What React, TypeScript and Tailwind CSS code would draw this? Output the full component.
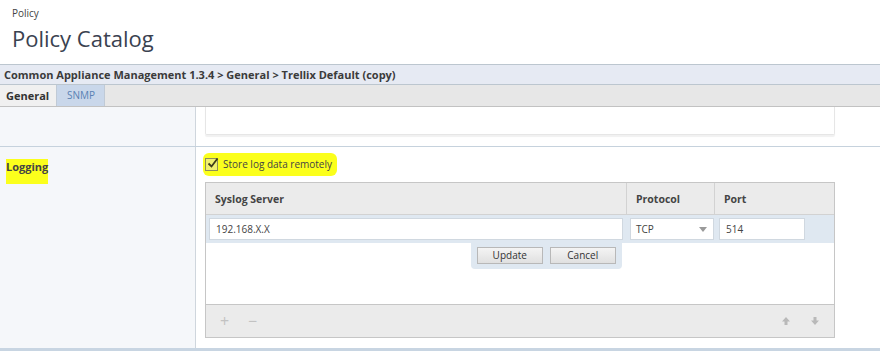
function ArrowUp() {
  return (
    <svg viewBox="0 0 10 10" className="h-[10px] w-[10px]" aria-hidden>
      <path d="M5 1 L9 5.5 H6.5 V9 H3.5 V5.5 H1 Z" fill="#b9b9b9" />
    </svg>
  );
}

function ArrowDown() {
  return (
    <svg viewBox="0 0 10 10" className="h-[10px] w-[10px]" aria-hidden>
      <path d="M5 9 L9 4.5 H6.5 V1 H3.5 V4.5 H1 Z" fill="#b9b9b9" />
    </svg>
  );
}

function CheckBox() {
  return (
    <span className="relative flex h-[13px] w-[13px] shrink-0 items-center justify-center border border-[#8f8f5a] bg-[#f0f070]">
      <svg viewBox="0 0 12 12" className="absolute -top-[2px] left-[1px] h-[12px] w-[12px]" aria-hidden>
        <path d="M1.5 6.5 L4.5 9.5 L10.5 1.5" fill="none" stroke="#3d3d1a" strokeWidth="1.8" />
      </svg>
    </span>
  );
}

export default function App() {
  return (
    <div className="h-[351px] w-[880px] overflow-hidden bg-white font-['Open_Sans',sans-serif] text-[#333]">
      <div className="px-3 pt-[6px]">
        <p className="text-[10px] leading-[14px] text-[#444]">Policy</p>
        <h1 className="mt-[3px] text-[22px] leading-[30px] text-[#3a4250]">Policy Catalog</h1>
      </div>

      <div className="mt-[11px] border-y border-[#bcc6cf] bg-[#e6eaf3] px-[4px] text-[11px] font-bold leading-[19px] text-[#3b3b3b]">
        Common Appliance Management 1.3.4 &gt; General &gt; Trellix Default (copy)
      </div>

      <div className="flex h-[22px] border-b border-[#c2c2c2] bg-[#e7e7e7] text-[11px] leading-[21px]">
        <div className="w-[56px] bg-[#f0f0f0] pl-[6px] font-bold text-[#333]">General</div>
        <div className="w-[49px] border-x border-[#c0cad6] bg-[#c9d7ea] pl-[10px] text-[10px] text-[#5a82b4]">SNMP</div>
      </div>

      <div className="flex h-[40px] border-b border-[#c6d2dd]">
        <div className="w-[196px] shrink-0 border-r border-[#cfd6dd] bg-[#f5f7fa]"></div>
        <div className="flex-1 pl-[9px] pr-[45px]">
          <div className="h-[28px] rounded-b-[2px] border-x border-b border-[#e6e6e6] shadow-[0_2px_1px_#f1f1f1]"></div>
        </div>
      </div>

      <div className="flex h-[204px] border-b-[3px] border-[#c8d5e2]">
        <div className="w-[196px] shrink-0 border-r border-[#cfd6dd] bg-[#f5f7fa] pt-[6px]">
          <span className="ml-[6px] inline-block bg-[#fbff1c] pb-[10px] pt-[1px] text-[11px] font-bold leading-[14px] text-[#444]">
            Logging
          </span>
        </div>
        <div className="flex-1 pl-[9px] pr-[45px] pt-[6px]">
          <div className="-ml-[2px] flex h-[23px] w-[134px] items-center gap-[5px] whitespace-nowrap rounded-[6px] bg-[#fbff1c] pl-[2px]">
            <CheckBox />
            <span className="text-[10px] text-[#444]">Store log data remotely</span>
          </div>

          <div className="mt-[6px] border border-[#c6c6c6]">
            <div className="flex h-[32px] border-b border-[#d2d2d2] bg-[#ebebeb] text-[10.5px] font-bold leading-[32px] text-[#444]">
              <div className="w-[421px] border-r border-[#d2d2d2] pl-[9px]">Syslog Server</div>
              <div className="w-[88px] border-r border-[#d2d2d2] pl-[9px]">Protocol</div>
              <div className="flex-1 pl-[9px]">Port</div>
            </div>

            <div className="relative h-[89px] bg-white">
              <div className="flex h-[28px] items-center bg-[#dfe8f1] text-[10px] text-[#444]">
                <div className="ml-[3px] flex h-[22px] w-[414px] items-center border border-[#d0d8e0] bg-white pl-[6px]">192.168.X.X</div>
                <div className="ml-[7px] flex h-[22px] w-[84px] items-center justify-between border border-[#d0d8e0] bg-white pl-[5px] pr-[6px]">
                  <span>TCP</span>
                  <svg viewBox="0 0 8 5" className="h-[5px] w-[8px]" aria-hidden>
                    <path d="M0 0 H8 L4 5 Z" fill="#9a9a9a" />
                  </svg>
                </div>
                <div className="ml-[5px] flex h-[22px] w-[86px] items-center border border-[#d0d8e0] bg-white pl-[6px]">514</div>
              </div>
              <div className="absolute left-[265px] top-[28px] flex h-[26px] w-[151px] items-start gap-[7px] rounded-b-[4px] bg-[#dfe8f1] px-[6px] pt-[4px]">
                <button className="h-[17px] w-[66px] border border-[#b8b8b8] bg-gradient-to-b from-[#f4f4f4] to-[#e0e0e0] text-[10px] leading-[15px] text-[#333]">
                  Update
                </button>
                <button className="h-[17px] w-[67px] border border-[#b8b8b8] bg-gradient-to-b from-[#f4f4f4] to-[#e0e0e0] text-[10px] leading-[15px] text-[#333]">
                  Cancel
                </button>
              </div>
            </div>

            <div className="flex h-[33px] items-center border-t border-[#c6c6c6] bg-[#ebebeb] px-[14px] text-[16px] leading-none text-[#c2c2c2]">
              <span className="w-[28px]">+</span>
              <span>−</span>
              <div className="ml-auto flex items-center gap-[19px]">
                <ArrowUp />
                <ArrowDown />
              </div>
            </div>
          </div>
        </div>
      </div>
    </div>
  );
}
